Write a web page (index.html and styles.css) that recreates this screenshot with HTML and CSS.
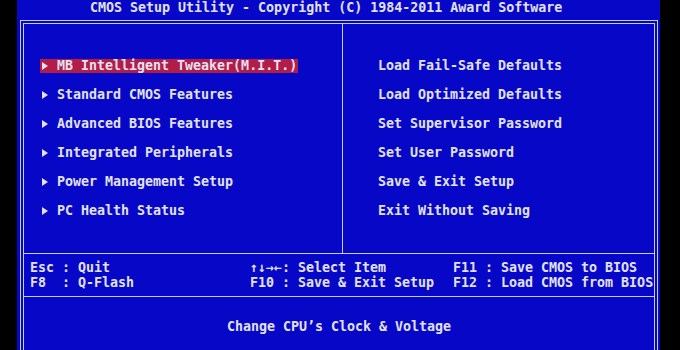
FILE: index.html
```html
<!DOCTYPE html>
<html lang="en">
<head>
<meta charset="UTF-8" />
<title>CMOS Setup Utility</title>
<link rel="stylesheet" href="styles.css">
</head>
<body>
<div class="screen">
  <div class="title">CMOS Setup Utility - Copyright (C) 1984-2011 Award Software</div>
  <div class="frame">
    <div class="menus">
      <div class="col left">
        <div class="item active"><svg class="arrow" width="6" height="8" viewBox="0 0 6 8"><path d="M0 0 L6 4 L0 8 Z"/></svg>MB Intelligent Tweaker(M.I.T.)</div>
        <div class="item"><svg class="arrow" width="6" height="8" viewBox="0 0 6 8"><path d="M0 0 L6 4 L0 8 Z"/></svg>Standard CMOS Features</div>
        <div class="item"><svg class="arrow" width="6" height="8" viewBox="0 0 6 8"><path d="M0 0 L6 4 L0 8 Z"/></svg>Advanced BIOS Features</div>
        <div class="item"><svg class="arrow" width="6" height="8" viewBox="0 0 6 8"><path d="M0 0 L6 4 L0 8 Z"/></svg>Integrated Peripherals</div>
        <div class="item"><svg class="arrow" width="6" height="8" viewBox="0 0 6 8"><path d="M0 0 L6 4 L0 8 Z"/></svg>Power Management Setup</div>
        <div class="item"><svg class="arrow" width="6" height="8" viewBox="0 0 6 8"><path d="M0 0 L6 4 L0 8 Z"/></svg>PC Health Status</div>
      </div>
      <div class="col right">
        <div class="item">Load Fail-Safe Defaults</div>
        <div class="item">Load Optimized Defaults</div>
        <div class="item">Set Supervisor Password</div>
        <div class="item">Set User Password</div>
        <div class="item">Save &amp; Exit Setup</div>
        <div class="item">Exit Without Saving</div>
      </div>
    </div>
    <div class="keys">
      <div>Esc : Quit</div>
      <div>↑↓→←: Select Item</div>
      <div>F11 : Save CMOS to BIOS</div>
      <div>F8&nbsp; : Q-Flash</div>
      <div>F10 : Save &amp; Exit Setup</div>
      <div>F12 : Load CMOS from BIOS</div>
    </div>
    <div class="help">Change CPU’s Clock &amp; Voltage</div>
  </div>
</div>
</body>
</html>
```

FILE: styles.css
```css
body {
  margin: 0;
  background-color: #000;
  font-family: "DejaVu Sans Mono", "Liberation Mono", monospace;
  font-size: 13.3px;
  font-weight: bold;
  color: #e2e2ee;
  height: 350px;
  overflow: hidden;
}
.screen {
  margin-left: 17px;
  width: 643px;
  height: 350px;
  background-color: #0707c8;
}
.title {
  height: 20px;
  line-height: 16px;
  padding-left: 73px;
  white-space: pre;
}
.frame {
  margin-left: 3px;
  width: 630px;
  height: 340px;
  border: 4px double #c4cefa;
}
.menus {
  display: flex;
  height: 229px;
  border-bottom: 1px solid #c4cefa;
}
.col {
  display: flex;
  flex-direction: column;
  gap: 15px;
  padding-top: 35px;
}
.left {
  width: 302px;
  padding-left: 16px;
  border-right: 1px solid #c4cefa;
}
.right {
  padding-left: 35px;
}
.item {
  display: flex;
  align-items: center;
  width: fit-content;
  height: 14px;
  line-height: 14px;
  white-space: pre;
}
.left .item {
  padding: 0 1px 0 2px;
}
.item.active {
  background-color: #b41c48;
}
.arrow {
  fill: #e2e2ee;
  margin-right: 9px;
}
.keys {
  display: grid;
  grid-template-columns: 220px 203px auto;
  grid-auto-rows: 15px;
  height: 43px;
  padding: 6px 0 0 6px;
  box-sizing: border-box;
  line-height: 15px;
  white-space: pre;
  border-bottom: 1px solid #c4cefa;
}
.help {
  text-align: center;
  padding-top: 22px;
  line-height: 16px;
}
```
